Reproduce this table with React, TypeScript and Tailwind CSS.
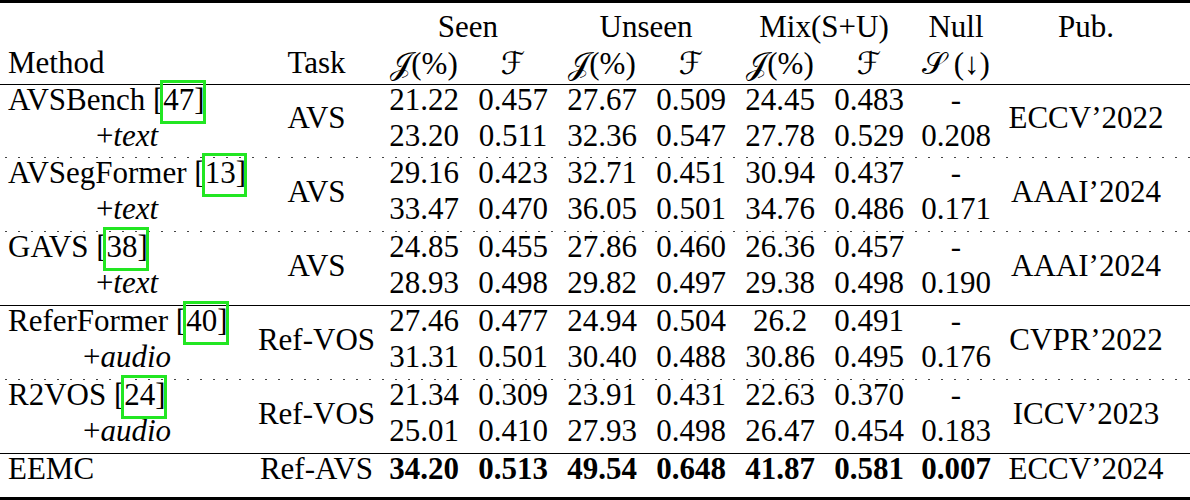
const cols =
  "grid grid-cols-[254px_125px_90px_88px_90px_88px_90px_88px_86px_174px]";

type Group = {
  name: string;
  cite: string;
  extra: string;
  task: string;
  a: string[];
  b: string[];
  pub: string;
  rule: "solid" | "dotted";
  tall?: boolean;
};

const groups: Group[] = [
  {
    name: "AVSBench",
    cite: "47",
    extra: "text",
    task: "AVS",
    a: ["21.22", "0.457", "27.67", "0.509", "24.45", "0.483", "-"],
    b: ["23.20", "0.511", "32.36", "0.547", "27.78", "0.529", "0.208"],
    pub: "ECCV’2022",
    rule: "solid",
  },
  {
    name: "AVSegFormer",
    cite: "13",
    extra: "text",
    task: "AVS",
    a: ["29.16", "0.423", "32.71", "0.451", "30.94", "0.437", "-"],
    b: ["33.47", "0.470", "36.05", "0.501", "34.76", "0.486", "0.171"],
    pub: "AAAI’2024",
    rule: "dotted",
    tall: true,
  },
  {
    name: "GAVS",
    cite: "38",
    extra: "text",
    task: "AVS",
    a: ["24.85", "0.455", "27.86", "0.460", "26.36", "0.457", "-"],
    b: ["28.93", "0.498", "29.82", "0.497", "29.38", "0.498", "0.190"],
    pub: "AAAI’2024",
    rule: "dotted",
    tall: true,
  },
  {
    name: "ReferFormer",
    cite: "40",
    extra: "audio",
    task: "Ref-VOS",
    a: ["27.46", "0.477", "24.94", "0.504", "26.2", "0.491", "-"],
    b: ["31.31", "0.501", "30.40", "0.488", "30.86", "0.495", "0.176"],
    pub: "CVPR’2022",
    rule: "solid",
    tall: true,
  },
  {
    name: "R2VOS",
    cite: "24",
    extra: "audio",
    task: "Ref-VOS",
    a: ["21.34", "0.309", "23.91", "0.431", "22.63", "0.370", "-"],
    b: ["25.01", "0.410", "27.93", "0.498", "26.47", "0.454", "0.183"],
    pub: "ICCV’2023",
    rule: "dotted",
    tall: true,
  },
];

const best = ["34.20", "0.513", "49.54", "0.648", "41.87", "0.581", "0.007"];

function Rule({ kind }: { kind: "solid" | "dotted" }) {
  if (kind === "dotted") {
    return (
      <div className="h-px w-full bg-[linear-gradient(to_right,#444_2px,transparent_2px)] bg-[length:13px_1px] bg-[position:5px_0]" />
    );
  }
  return <div className="h-px w-full bg-black" />;
}

function Cite({ n }: { n: string }) {
  return (
    <span>
      [
      <span className="relative">
        {n}]
        <span className="absolute -left-[3px] -right-[1px] -top-[2px] -bottom-[7px] border-[3px] border-[#22e622]" />
      </span>
    </span>
  );
}

// calligraphic math letters, DejaVu has the glyphs
const script = "font-['DejaVu_Serif','DejaVu_Sans',serif] not-italic";

function J() {
  return (
    <span>
      <span className={script}>𝒥</span>(%)
    </span>
  );
}

function F() {
  return <span className={script}>ℱ</span>;
}

export default function App() {
  return (
    <div className="w-[1190px] h-[500px] overflow-hidden bg-white text-black font-['Liberation_Serif',serif] text-[31px]">
      <div className="h-[3px] w-full bg-black" />
      <div className={`${cols} grid-rows-[36px_36px] pt-[9px] leading-[30px] text-center`}>
        <div className="col-span-2" />
        <div className="col-span-2">Seen</div>
        <div className="col-span-2">Unseen</div>
        <div className="col-span-2">Mix(S+U)</div>
        <div>Null</div>
        <div>Pub.</div>
        <div className="pl-[8px] text-left">Method</div>
        <div>Task</div>
        <div><J /></div>
        <div><F /></div>
        <div><J /></div>
        <div><F /></div>
        <div><J /></div>
        <div><F /></div>
        <div>
          <span className={script}>𝒮</span>&nbsp;(↓)
        </div>
      </div>

      {groups.map((g) => (
        <div key={g.name}>
          <Rule kind={g.rule} />
          <div
            className={`${cols} ${g.tall ? "grid-rows-[36px_37px]" : "grid-rows-[36px_36px]"} leading-[30px] whitespace-nowrap`}
          >
            <div className="pl-[8px]">
              {g.name} <Cite n={g.cite} />
            </div>
            <div className="row-span-2 flex items-center justify-center pb-[6px]">{g.task}</div>
            {g.a.map((v, i) => (
              <div key={i} className="text-center">
                {v}
              </div>
            ))}
            <div className="row-span-2 flex items-center justify-center pb-[6px]">{g.pub}</div>
            <div className="text-center">
              +<i>{g.extra}</i>
            </div>
            {g.b.map((v, i) => (
              <div key={i} className="text-center">
                {v}
              </div>
            ))}
          </div>
        </div>
      ))}

      <Rule kind="solid" />
      <div className={`${cols} grid-rows-[43px] leading-[30px] whitespace-nowrap`}>
        <div className="pl-[8px]">EEMC</div>
        <div className="text-center">Ref-AVS</div>
        {best.map((v, i) => (
          <div key={i} className="text-center font-bold">
            {v}
          </div>
        ))}
        <div className="text-center">ECCV’2024</div>
      </div>
      <div className="h-[3px] w-full bg-black" />
    </div>
  );
}
